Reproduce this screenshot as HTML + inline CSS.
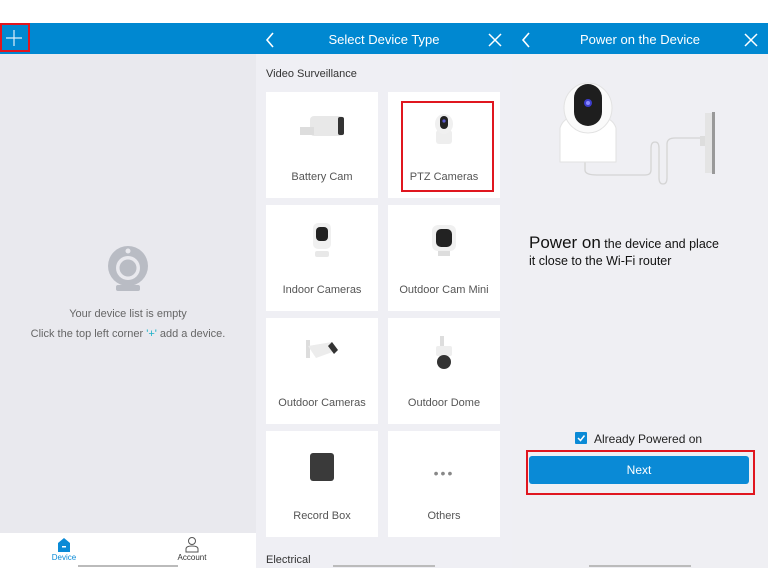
<!DOCTYPE html>
<html><head><meta charset="utf-8"><style>
*{box-sizing:border-box;margin:0;padding:0}
body{width:768px;height:568px;overflow:hidden;background:#fff;font-family:"Liberation Sans",sans-serif;position:relative}
.abs{position:absolute}
.bar{top:23px;height:31px;background:#0088d1}
.p{top:54px;height:514px}
.card{position:absolute;width:112px;height:106px;background:#fff;text-align:center;font-size:11px;color:#555}
.card span{position:absolute;left:0;right:0;top:79px}
.t{color:#fff;font-size:13px;text-align:center}
</style></head><body>
<!-- panel 1 -->
<div class="abs bar" style="left:0;width:256px"></div>
<div class="abs" style="left:0;top:23px;width:30px;height:29px;border:2px solid #e0161f"></div>
<svg class="abs" style="left:5px;top:29px" width="18" height="18"><path d="M9 1V17M1 9H17" stroke="#dbeefa" stroke-width="1.2"/></svg>
<div class="abs p" style="left:0;width:256px;background:#e9e9ee"></div>
<svg class="abs" style="left:106px;top:246px" width="44" height="46"><circle cx="22" cy="20" r="20" fill="#b9bcc4"/><circle cx="22" cy="22" r="12" fill="#e9e9ee"/><circle cx="22" cy="22" r="8.5" fill="#b9bcc4"/><circle cx="22" cy="5" r="2.5" fill="#e9e9ee"/><rect x="10" y="39" width="24" height="6" rx="2" fill="#b9bcc4"/></svg>
<div class="abs" style="left:0;width:256px;top:308px;text-align:center;font-size:11px;color:#666">Your device list is empty</div>
<div class="abs" style="left:0;width:256px;top:328px;text-align:center;font-size:11px;color:#666">Click the top left corner <span style="color:#1bb0c8">'+'</span> add a device.</div>
<div class="abs" style="left:0;top:533px;width:256px;height:35px;background:#fff"></div>
<svg class="abs" style="left:56px;top:537px" width="16" height="16"><path d="M2 6L8 1L14 6V15H2Z" fill="#0a8ad6"/><rect x="6" y="9" width="4" height="1.5" fill="#fff"/></svg>
<div class="abs" style="left:44px;top:553px;width:40px;text-align:center;font-size:8px;color:#0a8ad6">Device</div>
<svg class="abs" style="left:184px;top:536px" width="16" height="17"><circle cx="8" cy="5" r="3.5" fill="none" stroke="#555" stroke-width="1"/><path d="M2 16V13Q2 10 8 10Q14 10 14 13V16Z" fill="none" stroke="#555" stroke-width="1"/></svg>
<div class="abs" style="left:170px;top:553px;width:44px;text-align:center;font-size:8px;color:#333">Account</div>
<div class="abs" style="left:78px;top:565px;width:100px;height:2px;background:#bbb"></div>
<!-- panel 2 -->
<div class="abs bar" style="left:256px;width:256px"></div>
<div class="abs t" style="left:256px;width:256px;top:32px">Select Device Type</div>
<svg class="abs" style="left:264px;top:31px" width="12" height="18"><path d="M9 2L3 9L9 16" stroke="#fff" stroke-width="1.6" fill="none"/></svg>
<svg class="abs" style="left:488px;top:33px" width="14" height="14"><path d="M1 1L13 13M13 1L1 13" stroke="#fff" stroke-width="1.5"/></svg>
<div class="abs p" style="left:256px;width:256px;background:#efeff4"></div>
<div class="abs" style="left:266px;top:68px;font-size:11px;color:#333">Video Surveillance</div>
<div class="card" style="left:266px;top:92px"><svg style="position:absolute;left:34px;top:22px" width="46" height="26"><rect x="10" y="2" width="34" height="20" rx="4" fill="#e8e8e8"/><rect x="38" y="3" width="6" height="18" rx="2" fill="#333"/><rect x="0" y="13" width="14" height="8" fill="#ddd"/></svg><span>Battery Cam</span></div>
<div class="card" style="left:388px;top:92px"><svg style="position:absolute;left:44px;top:20px" width="24" height="34"><rect x="4" y="18" width="16" height="14" rx="3" fill="#eee"/><ellipse cx="12" cy="12" rx="9" ry="10" fill="#f0f0f0"/><rect x="8" y="4" width="8" height="13" rx="4" fill="#222"/><circle cx="12" cy="9" r="1.6" fill="#5a5ad0"/></svg><span>PTZ Cameras</span></div>
<div class="abs" style="left:401px;top:101px;width:93px;height:91px;border:2px solid #e0161f"></div>
<div class="card" style="left:266px;top:205px"><svg style="position:absolute;left:44px;top:16px" width="24" height="40"><rect x="3" y="2" width="18" height="26" rx="5" fill="#f0f0f0"/><rect x="6" y="6" width="12" height="14" rx="4" fill="#222"/><rect x="5" y="30" width="14" height="6" rx="2" fill="#e8e8e8"/></svg><span>Indoor Cameras</span></div>
<div class="card" style="left:388px;top:205px"><svg style="position:absolute;left:42px;top:18px" width="28" height="34"><rect x="2" y="2" width="24" height="26" rx="6" fill="#f0f0f0"/><rect x="6" y="6" width="16" height="18" rx="5" fill="#222"/><rect x="8" y="28" width="12" height="5" fill="#ddd"/></svg><span>Outdoor Cam Mini</span></div>
<div class="card" style="left:266px;top:318px"><svg style="position:absolute;left:36px;top:18px" width="40" height="32"><rect x="4" y="4" width="4" height="18" fill="#ddd"/><path d="M6 10L30 6L36 14L14 22Z" fill="#ececec"/><path d="M30 6L36 14L32 18L26 10Z" fill="#333"/></svg><span>Outdoor Cameras</span></div>
<div class="card" style="left:388px;top:318px"><svg style="position:absolute;left:44px;top:16px" width="24" height="40"><rect x="8" y="2" width="4" height="10" fill="#ddd"/><rect x="4" y="12" width="16" height="10" rx="2" fill="#eee"/><circle cx="12" cy="28" r="7" fill="#333"/></svg><span>Outdoor Dome</span></div>
<div class="card" style="left:266px;top:431px"><svg style="position:absolute;left:42px;top:20px" width="28" height="32"><rect x="2" y="2" width="24" height="28" rx="3" fill="#3a3a3a"/></svg><span>Record Box</span></div>
<div class="card" style="left:388px;top:431px"><div style="position:absolute;left:0;right:0;top:34px;font-size:14px;color:#888;letter-spacing:2px">•••</div><span>Others</span></div>
<div class="abs" style="left:266px;top:554px;font-size:11px;color:#333">Electrical</div>
<div class="abs" style="left:333px;top:565px;width:102px;height:2px;background:#bbb"></div>
<!-- panel 3 -->
<div class="abs bar" style="left:512px;width:256px"></div>
<div class="abs t" style="left:512px;width:256px;top:32px">Power on the Device</div>
<svg class="abs" style="left:520px;top:31px" width="12" height="18"><path d="M9 2L3 9L9 16" stroke="#fff" stroke-width="1.6" fill="none"/></svg>
<svg class="abs" style="left:744px;top:33px" width="14" height="14"><path d="M1 1L13 13M13 1L1 13" stroke="#fff" stroke-width="1.5"/></svg>
<div class="abs p" style="left:512px;width:256px;background:#efeff3"></div>
<svg class="abs" style="left:555px;top:78px" width="170" height="110"><path d="M30 82V92Q30 97 42 97H90Q96 97 96 92V70Q96 64 100 64Q104 64 104 70V100Q104 106 108 106Q112 106 112 100V66Q112 60 120 60H160" stroke="#d4d4d4" stroke-width="1.3" fill="none"/><path d="M5 50Q8 40 20 38H44Q58 40 61 50V84H5Z" fill="#fff" stroke="#e2e2e2" stroke-width="1"/><ellipse cx="33" cy="30" rx="24" ry="25" fill="#fafafa" stroke="#e2e2e2" stroke-width="1"/><rect x="19" y="6" width="28" height="42" rx="14" fill="#1e1e1e"/><circle cx="33" cy="25" r="4" fill="#3d3dcc"/><circle cx="33" cy="25" r="2" fill="#8a8aff"/><rect x="145" y="58" width="5" height="10" fill="#ddd"/><rect x="150" y="35" width="7" height="60" fill="#e4e4e4"/><rect x="157" y="34" width="3" height="62" fill="#999"/></svg>
<div class="abs" style="left:529px;top:234px;font-size:12.5px;color:#111;line-height:17px;width:230px"><span style="font-size:17px">Power on</span> the device and place<br>it close to the Wi-Fi router</div>
<div class="abs" style="left:575px;top:432px;width:12px;height:12px;background:#0a8ad6;border-radius:1px"></div>
<svg class="abs" style="left:575px;top:432px" width="12" height="12"><path d="M3 6L5.5 8.5L9.5 3.5" stroke="#fff" stroke-width="1.5" fill="none"/></svg>
<div class="abs" style="left:594px;top:432px;font-size:12px;color:#222">Already Powered on</div>
<div class="abs" style="left:526px;top:450px;width:229px;height:45px;border:2px solid #e0161f"></div>
<div class="abs" style="left:529px;top:456px;width:220px;height:28px;background:#0a8ad6;border-radius:3px;color:#fff;font-size:12px;text-align:center;line-height:28px">Next</div>
<div class="abs" style="left:589px;top:565px;width:102px;height:2px;background:#bbb"></div>
</body></html>
